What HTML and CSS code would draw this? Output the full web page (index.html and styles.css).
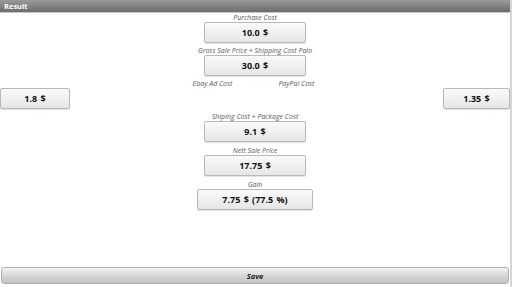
FILE: index.html
```html
<html>
<head>
    <meta name="viewport" content="width=device-width">
    <title>Result</title>
    <link rel="stylesheet" href="styles.css">
</head>
<body>

<div class="screen">
    <div class="titlebar">Result</div>

    <div class="content">
        <div class="field">
            <div class="label">Purchase Cost</div>
            <div class="value">10.0 $</div>
        </div>
        <div class="field">
            <div class="label">Gross Sale Price + Shipping Cost Palo</div>
            <div class="value">30.0 $</div>
        </div>

        <div class="split">
            <div class="split-labels">
                <span class="label">Ebay Ad Cost</span>
                <span class="label">PayPal Cost</span>
            </div>
            <div class="split-values">
                <div class="value value-left">1.8 $</div>
                <div class="value value-right">1.35 $</div>
            </div>
        </div>

        <div class="field">
            <div class="label">Shiping Cost + Package Cost</div>
            <div class="value">9.1 $</div>
        </div>
        <div class="field field-loose">
            <div class="label">Nett Sale Price</div>
            <div class="value">17.75 $</div>
        </div>
        <div class="field field-loose">
            <div class="label">Gain</div>
            <div class="value value-wide">7.75 $ (77.5 %)</div>
        </div>
    </div>

    <button class="save-button">Save</button>
</div>

</body>
</html>
```

FILE: styles.css
```css
body {
    margin: 0;
    padding: 0;
    overflow: hidden;
    background: #fff;
    font-family: "Open Sans", "DejaVu Sans", sans-serif;
}

.screen {
    width: 512px;
    height: 287px;
    box-sizing: border-box;
    border-right: 2px solid #d6d6d6;
    display: flex;
    flex-direction: column;
}

.titlebar {
    height: 12px;
    line-height: 12px;
    padding-left: 4px;
    font-size: 7.5px;
    font-weight: bold;
    color: #fff;
    background: linear-gradient(#9a9a9a, #6c6c6c);
    border-bottom: 1px solid #c8c8c8;
}

.content {
    flex: 1;
    display: flex;
    flex-direction: column;
    align-items: center;
}

.field {
    display: flex;
    flex-direction: column;
    align-items: center;
}

.field-loose {
    margin-top: 1px;
}

.label {
    font-size: 7px;
    font-style: italic;
    color: #5a5a5a;
    height: 9px;
    line-height: 9px;
}

.value {
    width: 100px;
    height: 19px;
    line-height: 19px;
    margin-bottom: 3px;
    text-align: center;
    font-size: 9px;
    font-weight: bold;
    word-spacing: 1px;
    color: #111;
    border: 1px solid #b8b8b8;
    border-radius: 2px;
    background: linear-gradient(#fafafa, #e6e6e6);
    box-shadow: 0 1px 1px rgba(0, 0, 0, 0.12);
}

.value-wide {
    width: 114px;
}

.split {
    align-self: stretch;
    display: flex;
    flex-direction: column;
}

.split-labels {
    display: flex;
    justify-content: center;
    gap: 46px;
    padding-right: 3px;
}

.split-values {
    display: flex;
    justify-content: space-between;
}

.value-left {
    width: 68px;
}

.value-right {
    width: 65px;
}

.save-button {
    margin: 0 0 3px 1px;
    width: 508px;
    height: 17px;
    padding: 0;
    font-family: "Open Sans", "DejaVu Sans", sans-serif;
    font-size: 7.5px;
    font-weight: bold;
    font-style: italic;
    color: #222;
    border: 1px solid #b0b0b0;
    border-radius: 3px;
    background: linear-gradient(#f2f2f2, #d2d2d2 60%, #c4c4c4);
}
```
